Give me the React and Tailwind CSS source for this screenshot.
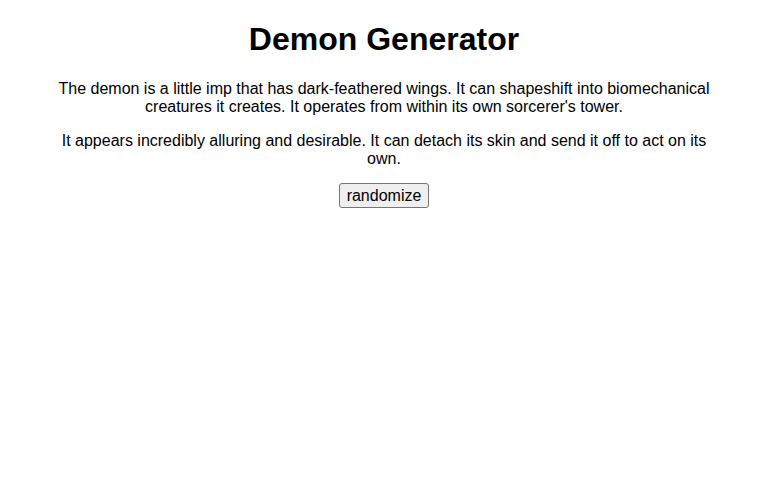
export default function App() {
  return (
    <div
      className="min-h-[480px] bg-white px-[48px] text-center text-black"
      style={{ fontFamily: '"Liberation Sans", Arial, sans-serif' }}
    >
      <h1 className="pt-[21px] text-[32px] font-bold leading-[37px]">Demon Generator</h1>
      <p className="mt-[22px] text-[16px] leading-[18.4px]">
        The demon is a little imp that has dark-feathered wings. It can shapeshift into biomechanical
        creatures it creates. It operates from within its own sorcerer's tower.
      </p>
      <p className="mt-[15px] text-[16px] leading-[18.4px]">
        It appears incredibly alluring and desirable. It can detach its skin and send it off to act on its
        own.
      </p>
      <div className="mt-[14px]">
        <button className="rounded-[3px] border border-[#767676] bg-[#efefef] px-[7px] py-[2px] text-[16px] leading-[19px] text-black">
          randomize
        </button>
      </div>
    </div>
  );
}
